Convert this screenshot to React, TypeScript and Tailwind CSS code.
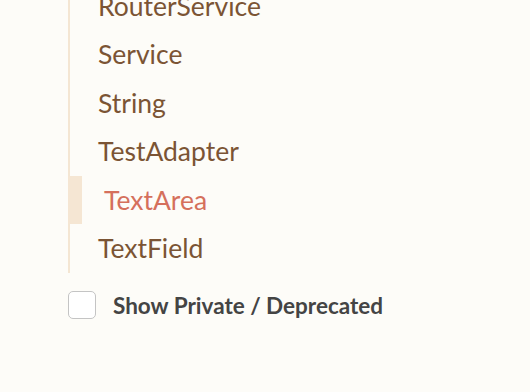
const items = ["RouterService", "Service", "String", "TestAdapter", "TextArea", "TextField"]
const active = "TextArea"

export default function App() {
  return (
    <div className="h-[392px] w-[530px] overflow-hidden bg-[#fdfcf8] font-['Lato','Noto_Sans',sans-serif]">
      <div className="pl-[68px]">
        {/* Class list */}
        <ul className="-mt-[18.5px] border-l-2 border-[#f4e6d3]">
          {items.map((name) => (
            <li key={name} className="flex h-[48.5px] items-center">
              {name === active ? (
                <a className="flex h-full items-center border-l-[14px] border-[#f5e6d3] -ml-[2px] pl-[22px] pt-[2px] text-[26.5px] text-[#d5705c]">
                  {name}
                </a>
              ) : (
                <a className="pl-[28px] pt-[2px] text-[26.5px] text-[#7b5434]">{name}</a>
              )}
            </li>
          ))}
        </ul>

        {/* Toggle */}
        <label className="mt-[18px] flex items-start gap-[17px]">
          <span className="h-[28px] w-[28px] rounded-[5px] border border-[#c4c4c4] bg-white" />
          <span className="pt-[1px] text-[22.5px] leading-[28px] font-bold text-[#444444]">Show Private / Deprecated</span>
        </label>
      </div>
    </div>
  )
}
